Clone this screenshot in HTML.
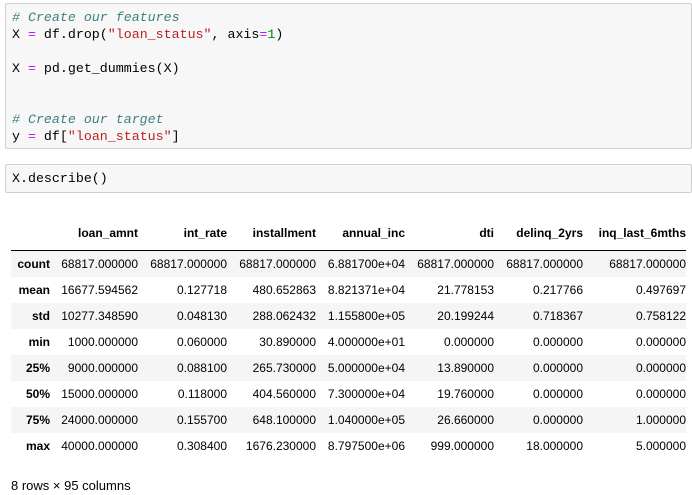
<!DOCTYPE html>
<html><head><meta charset="utf-8"><style>
body{margin:0;width:692px;height:495px;background:#fff;overflow:hidden;position:relative;font-family:"Liberation Sans",Arial,sans-serif;}
.cell{position:absolute;left:5px;right:0;background:#f7f7f7;border:1px solid #cfcfcf;border-radius:2px;font-family:"Liberation Mono",monospace;font-size:13.3px;line-height:17px;padding:0 6px;white-space:pre;color:#000}
.c{color:#408080;font-style:italic}.s{color:#ba2121}.o{color:#aa22ff}.n{color:#080}
table{position:absolute;left:11px;top:215px;border-collapse:collapse;font-size:12px;color:#000}
th,td{text-align:right;padding:0;height:26px;vertical-align:middle}
td{font-weight:normal}
thead th{height:35px;border-bottom:1px solid #000}
tbody tr:nth-child(odd){background:#f5f5f5}
th{font-weight:bold}
.foot{position:absolute;left:11px;top:478px;font-size:13px}
</style></head><body>
<div class="cell" style="top:3px;height:146px;padding-top:5px;box-sizing:border-box"><span class="c"># Create our features</span>
X <span class="o">=</span> df.drop(<span class="s">"loan_status"</span>, axis<span class="o">=</span><span class="n">1</span>)

X <span class="o">=</span> pd.get_dummies(X)


<span class="c"># Create our target</span>
y <span class="o">=</span> df[<span class="s">"loan_status"</span>]</div>
<div class="cell" style="top:164px;height:29px;box-sizing:border-box;padding-top:5px">X.describe()</div>
<table>
<colgroup><col style="width:39px"><col style="width:88px"><col style="width:89px"><col style="width:89px"><col style="width:89px"><col style="width:89px"><col style="width:89px"><col style="width:103px"></colgroup>
<thead><tr><th></th><th>loan_amnt</th><th>int_rate</th><th>installment</th><th>annual_inc</th><th>dti</th><th>delinq_2yrs</th><th>inq_last_6mths</th></tr></thead>
<tbody>
<tr><th>count</th><td>68817.000000</td><td>68817.000000</td><td>68817.000000</td><td>6.881700e+04</td><td>68817.000000</td><td>68817.000000</td><td>68817.000000</td></tr>
<tr><th>mean</th><td>16677.594562</td><td>0.127718</td><td>480.652863</td><td>8.821371e+04</td><td>21.778153</td><td>0.217766</td><td>0.497697</td></tr>
<tr><th>std</th><td>10277.348590</td><td>0.048130</td><td>288.062432</td><td>1.155800e+05</td><td>20.199244</td><td>0.718367</td><td>0.758122</td></tr>
<tr><th>min</th><td>1000.000000</td><td>0.060000</td><td>30.890000</td><td>4.000000e+01</td><td>0.000000</td><td>0.000000</td><td>0.000000</td></tr>
<tr><th>25%</th><td>9000.000000</td><td>0.088100</td><td>265.730000</td><td>5.000000e+04</td><td>13.890000</td><td>0.000000</td><td>0.000000</td></tr>
<tr><th>50%</th><td>15000.000000</td><td>0.118000</td><td>404.560000</td><td>7.300000e+04</td><td>19.760000</td><td>0.000000</td><td>0.000000</td></tr>
<tr><th>75%</th><td>24000.000000</td><td>0.155700</td><td>648.100000</td><td>1.040000e+05</td><td>26.660000</td><td>0.000000</td><td>1.000000</td></tr>
<tr><th>max</th><td>40000.000000</td><td>0.308400</td><td>1676.230000</td><td>8.797500e+06</td><td>999.000000</td><td>18.000000</td><td>5.000000</td></tr>
</tbody></table>
<div class="foot">8 rows × 95 columns</div>
</body></html>
